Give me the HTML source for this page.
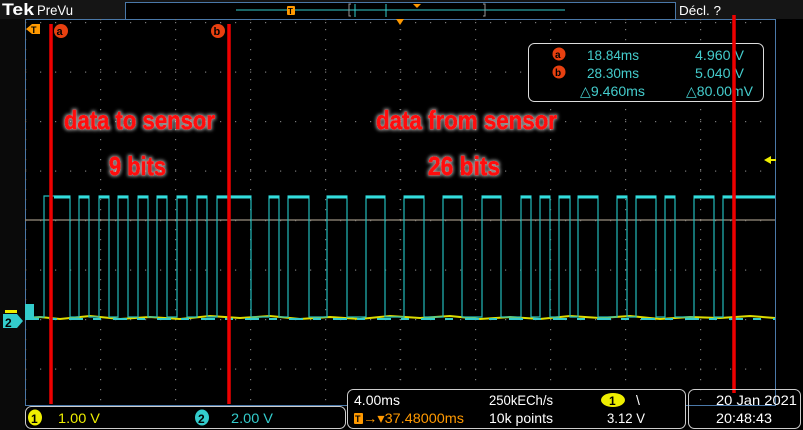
<!DOCTYPE html>
<html><head><meta charset="utf-8"><style>
body{margin:0;background:#000;width:803px;height:430px;overflow:hidden}
svg{display:block}
text{font-family:"Liberation Sans",sans-serif}
.n{font-family:"Liberation Sans",sans-serif}
.big{font-family:"Liberation Sans",sans-serif;font-weight:bold;font-size:26px;fill:#ff1010;stroke:#ff1010;stroke-width:0.8;filter:url(#glow)}
</style></head><body>
<svg width="803" height="430" viewBox="0 0 803 430" xmlns="http://www.w3.org/2000/svg">
<defs>
<filter id="glow" x="-20%" y="-40%" width="140%" height="180%">
<feMorphology operator="dilate" radius="1" in="SourceAlpha" result="d"/>
<feGaussianBlur in="d" stdDeviation="1.5" result="b"/>
<feFlood flood-color="#fff" flood-opacity="0.55"/>
<feComposite in2="b" operator="in" result="g"/>
<feMerge><feMergeNode in="g"/><feMergeNode in="SourceGraphic"/></feMerge>
</filter>
<pattern id="dh" width="15" height="49.5" patternUnits="userSpaceOnUse" x="25" y="22">
<rect x="0" y="0" width="1.2" height="1.2" fill="#777"/>
</pattern>
<pattern id="dv" width="75" height="10" patternUnits="userSpaceOnUse" x="25" y="19">
<rect x="0" y="0" width="1.2" height="1.2" fill="#777"/>
</pattern>
</defs>
<rect width="803" height="19" fill="#151515"/>
<rect x="0" y="19" width="25" height="411" fill="#0a0a0a"/>
<text x="2" y="15" font-family="Liberation Serif" font-weight="bold" font-size="17" fill="#fff" textLength="32" lengthAdjust="spacingAndGlyphs">Tek</text>
<text x="37" y="15" font-size="14" fill="#fff" textLength="36" lengthAdjust="spacingAndGlyphs">PreVu</text>
<rect x="125.5" y="2.5" width="550" height="17" fill="#000" stroke="#4a78a8"/>
<line x1="236" y1="10" x2="565" y2="10" stroke="#3cc" stroke-width="1"/>
<rect x="287" y="6" width="8" height="9" rx="1" fill="#f90"/>
<text x="288" y="14" font-size="8" font-weight="bold" fill="#000">T</text>
<path d="M351 4h-2v12h2" stroke="#999" fill="none"/><path d="M483 4h2v12h-2" stroke="#999" fill="none"/>
<line x1="355" y1="4" x2="355" y2="17" stroke="#3cc"/><line x1="386" y1="4" x2="386" y2="17" stroke="#3cc"/>
<path d="M413 4h8l-4 4z" fill="#f90"/>
<text x="679" y="15" font-size="13" fill="#fff" textLength="42" lengthAdjust="spacingAndGlyphs">Décl. ?</text>
<rect x="25.5" y="19.5" width="750" height="386" fill="none" stroke="#4a78a8"/>
<rect x="25" y="22" width="750" height="384" fill="url(#dh)"/>
<rect x="25" y="19" width="750" height="387" fill="url(#dv)"/>
<line x1="400" y1="19" x2="400" y2="406" stroke="#777" stroke-dasharray="1 9"/>
<line x1="25" y1="220" x2="775" y2="220" stroke="#9a9080" stroke-width="1.2"/>
<path d="M396 19h8l-4 6z" fill="#f90"/>
<path d="M26 29l6-5h8v10h-8z" fill="#f90"/><text x="31" y="33" font-size="9" font-weight="bold" fill="#000">T</text>
<circle cx="61" cy="31" r="7" fill="#e84010"/><text x="56.5" y="35" font-size="11" font-weight="bold" fill="#000">a</text>
<circle cx="218" cy="31" r="7" fill="#e84010"/><text x="213.5" y="35" font-size="11" font-weight="bold" fill="#000">b</text>
<path d="M764 160l7-4v3h5v2h-5v3z" fill="#ee0"/>
<path d="M25 318 L40 317 L60 319 L90 316 L120 319 L150 317 L180 319 L210 316 L240 318 L270 316 L300 319 L330 317 L360 319 L390 316 L420 318 L450 316 L480 319 L510 317 L540 319 L570 316 L600 318 L630 316 L660 319 L690 317 L720 318 L750 316 L775 318" stroke="#dd0" stroke-width="2" fill="none"/>
<path d="M25 317H44V196H70V317H79V196H89V317H99V196H109V317H118V196H128V317H138V196H148V317H157V196H167V317H177V196H187V317H197V196H207V317H217V196H251V317H269V196H279V317H288V196H309V317H327V196H347V317H366V196H385V317H404V196H424V317H443V196H462V317H482V196H501V317H521V196H531V317H540V196H550V317H559V196H570V317H578V196H598V317H617V196H627V317H636V196H656V317H665V196H675V317H694V196H714V317H723V196H775" stroke="#2bb" stroke-width="1.2" fill="none"/>
<path d="M54 197H70M79 197H89M99 197H109M118 197H128M138 197H148M157 197H167M177 197H187M197 197H207M217 197H251M269 197H279M288 197H309M327 197H347M366 197H385M404 197H424M443 197H462M482 197H501M521 197H531M540 197H550M559 197H570M578 197H598M617 197H627M636 197H656M665 197H675M694 197H714M723 197H775" stroke="#3dd" stroke-width="3" fill="none"/>
<path d="M25 319H775" stroke="#3cc" stroke-width="2" stroke-dasharray="14 10 8 12" fill="none"/>
<rect x="25" y="304" width="9" height="15" fill="#3cc"/>
<path d="M3 314l14 0 6 7-6 7H3z" fill="#3cc"/><text x="5" y="327" font-size="12" font-weight="bold" fill="#000">2</text>
<path d="M5 310h12v3H5z" fill="#ee0"/>
<line x1="51" y1="24" x2="51" y2="404" stroke="#e00" stroke-width="3.5"/>
<line x1="229" y1="24" x2="229" y2="404" stroke="#e00" stroke-width="3.5"/>
<text x="64" y="129" class="big" textLength="151" lengthAdjust="spacingAndGlyphs">data to sensor</text>
<text x="109" y="175" class="big" textLength="57" lengthAdjust="spacingAndGlyphs">9 bits</text>
<text x="376" y="129" class="big" textLength="181" lengthAdjust="spacingAndGlyphs">data from sensor</text>
<text x="428" y="175" class="big" textLength="72" lengthAdjust="spacingAndGlyphs">26 bits</text>
<rect x="528.5" y="43.5" width="235" height="58" rx="6" fill="#000" stroke="#ddd"/>
<g font-size="14" fill="#4cc">
<circle cx="559" cy="54" r="6.5" fill="#e84010"/><text x="555" y="58" font-size="10" font-weight="bold" fill="#000">a</text>
<circle cx="559" cy="72" r="6.5" fill="#e84010"/><text x="555" y="76" font-size="10" font-weight="bold" fill="#000">b</text>
<text x="587" y="60" textLength="52" lengthAdjust="spacingAndGlyphs">18.84ms</text><text x="695" y="60" textLength="49" lengthAdjust="spacingAndGlyphs">4.960 V</text>
<text x="587" y="78" textLength="52" lengthAdjust="spacingAndGlyphs">28.30ms</text><text x="695" y="78" textLength="49" lengthAdjust="spacingAndGlyphs">5.040 V</text>
<text x="580" y="96" textLength="65" lengthAdjust="spacingAndGlyphs">△9.460ms</text><text x="686" y="96" textLength="67" lengthAdjust="spacingAndGlyphs">△80.00mV</text>
</g>
<line x1="734" y1="15" x2="734" y2="393" stroke="#e00" stroke-width="3.5"/>
<rect x="25.5" y="406.5" width="320" height="22" rx="6" fill="#000" stroke="#ccc"/>
<ellipse cx="35" cy="417.5" rx="7" ry="8" fill="#ee0"/><text x="31" y="423" font-size="12" font-weight="bold" fill="#000">1</text>
<text x="58" y="423" font-size="14" fill="#ee0" textLength="42" lengthAdjust="spacingAndGlyphs">1.00 V</text>
<ellipse cx="202" cy="417.5" rx="7" ry="8" fill="#3cc"/><text x="198" y="423" font-size="12" font-weight="bold" fill="#000">2</text>
<text x="231" y="423" font-size="14" fill="#3cc" textLength="42" lengthAdjust="spacingAndGlyphs">2.00 V</text>
<rect x="347.5" y="389.5" width="338" height="39" rx="6" fill="#000" stroke="#ccc"/>
<g font-size="14" fill="#fff">
<text x="354" y="405" textLength="46" lengthAdjust="spacingAndGlyphs">4.00ms</text>
<text x="489" y="405" textLength="64" lengthAdjust="spacingAndGlyphs">250kECh/s</text>
<text x="636" y="405">\</text>
<text x="489" y="423" textLength="64" lengthAdjust="spacingAndGlyphs">10k points</text>
<text x="607" y="423" textLength="38" lengthAdjust="spacingAndGlyphs">3.12 V</text>
<text x="716" y="405" textLength="81" lengthAdjust="spacingAndGlyphs">20 Jan  2021</text>
<text x="716" y="423" textLength="56" lengthAdjust="spacingAndGlyphs">20:48:43</text>
</g>
<ellipse cx="613" cy="400" rx="12" ry="7" fill="#ee0"/><text x="609" y="405" font-size="12" font-weight="bold" fill="#000">1</text>
<rect x="354" y="413" width="9" height="11" rx="1" fill="#f90"/><text x="355" y="422" font-size="9" font-weight="bold" fill="#000">T</text>
<text x="363" y="423" font-size="14" fill="#f90" textLength="101" lengthAdjust="spacingAndGlyphs">→▾37.48000ms</text>
<rect x="688.5" y="389.5" width="112" height="39" rx="6" fill="none" stroke="#ccc"/>
</svg>
</body></html>
